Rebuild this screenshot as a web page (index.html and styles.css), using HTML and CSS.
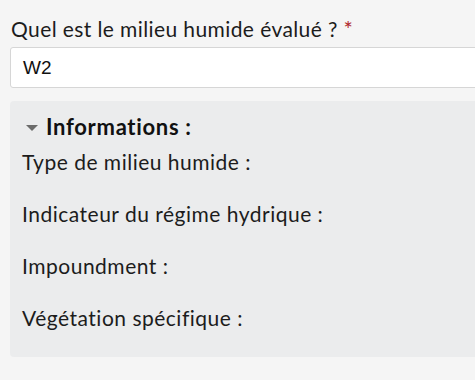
FILE: index.html
```html
<!DOCTYPE html>
<html lang="fr">
<head>
    <meta charset="UTF-8">
    <title>Milieu humide</title>
    <link rel="stylesheet" href="styles.css">
</head>
<body>
<div class="form-wrap">
    <div class="field">
        <label class="field-label">Quel est le milieu humide évalué ? <span class="required">*</span></label>
        <div class="field-input">W2</div>
    </div>

    <!-- Bloc d'informations repliable -->
    <div class="info-panel">
        <div class="info-title">
            <span class="caret"></span>
            Informations :
        </div>
        <div class="info-row">Type de milieu humide :</div>
        <div class="info-row">Indicateur du régime hydrique :</div>
        <div class="info-row">Impoundment :</div>
        <div class="info-row">Végétation spécifique :</div>
    </div>
</div>
</body>
</html>
```

FILE: styles.css
```css
html, body {
    margin: 0;
    padding: 0;
    overflow: hidden;
}

body {
    background-color: #f5f5f5;
    font-family: Lato, "Open Sans", sans-serif;
    color: #1c1c1c;
}

.form-wrap {
    width: 520px;
    padding: 16px 0 0 10px;
}

.field-label {
    display: block;
    font-size: 21px;
    line-height: 26px;
    letter-spacing: 0.4px;
    padding-left: 1px;
    margin-bottom: 5px;
}

.required {
    color: #b0262a;
    font-size: 22px;
}

.field-input {
    box-sizing: border-box;
    height: 41px;
    padding: 1px 12px 0 12px;
    background-color: #fff;
    border: 1px solid #d6d6d6;
    border-radius: 3px;
    font-family: "Liberation Sans", Arial, sans-serif;
    font-size: 19px;
    line-height: 38px;
    color: #111;
}

.info-panel {
    margin-top: 13px;
    height: 256px;
    box-sizing: border-box;
    padding: 13px 12px 0 12px;
    background-color: #ebeced;
    border-radius: 4px;
}

.info-title {
    display: flex;
    align-items: center;
    gap: 8px;
    font-size: 22px;
    font-weight: bold;
    line-height: 26px;
    letter-spacing: 0.7px;
    color: #111;
    padding-left: 4px;
}

.caret {
    width: 0;
    height: 0;
    margin-top: 2px;
    border-left: 6.5px solid transparent;
    border-right: 6.5px solid transparent;
    border-top: 6px solid #6b6b6b;
}

.info-row {
    font-size: 21px;
    line-height: 26px;
    letter-spacing: 0.5px;
    margin-top: 26px;
}

.info-title + .info-row {
    margin-top: 9px;
}
```
